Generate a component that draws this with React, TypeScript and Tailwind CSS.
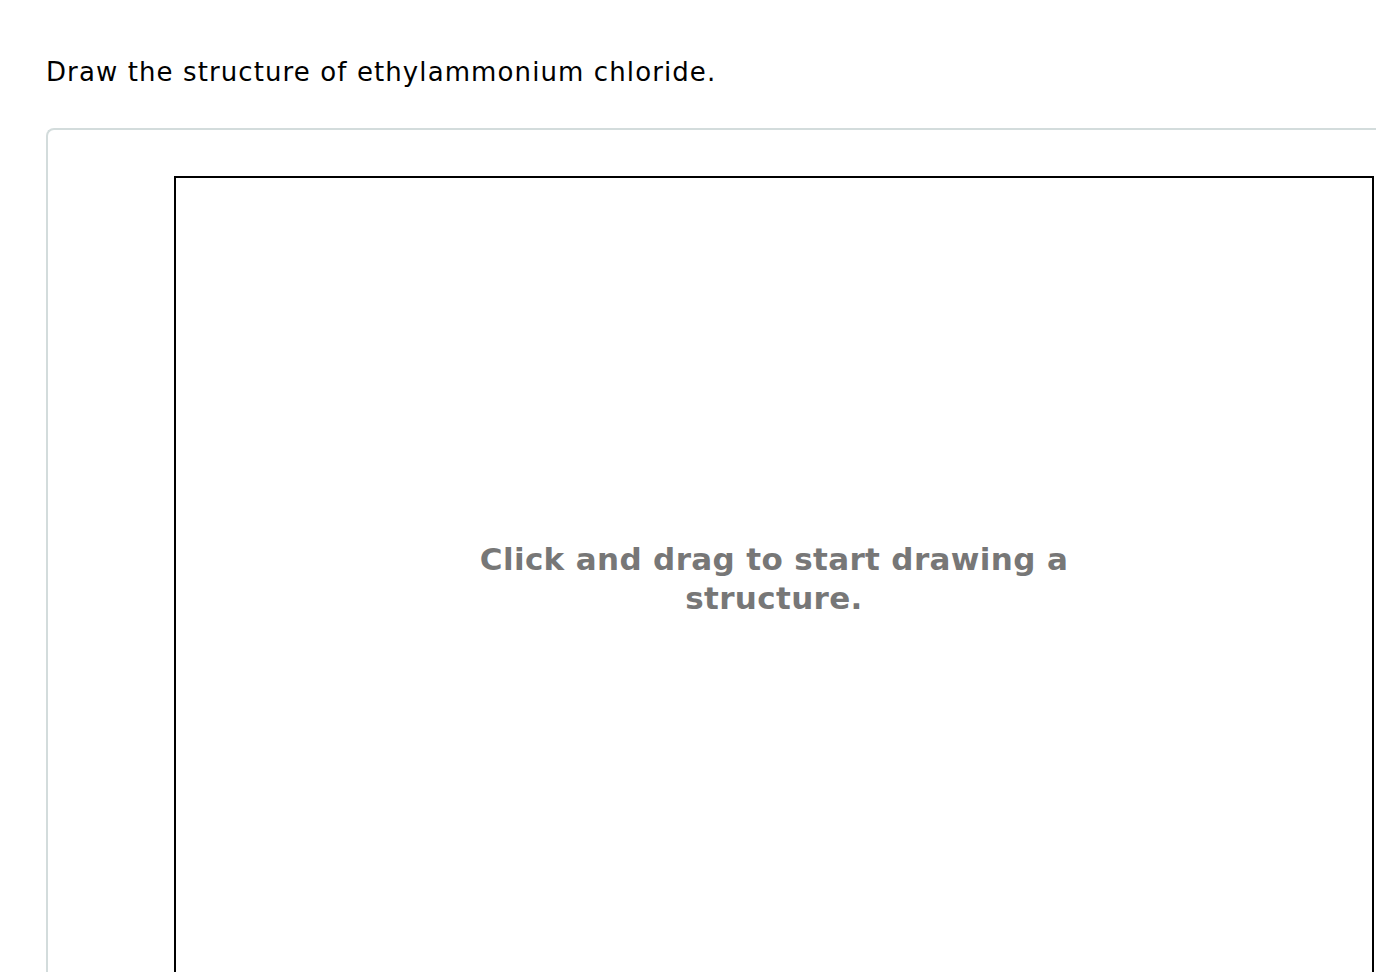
export default function App() {
  return (
    <div className="min-h-screen overflow-hidden bg-white pt-[52px] pl-[46px] font-['DejaVu_Sans',Verdana,sans-serif]">
      <p className="text-[26px] leading-[40px] tracking-[1.1px] text-black">Draw the structure of ethylammonium chloride.</p>

      <div className="mt-[36px] w-[1400px] rounded-tl-[8px] border-l-2 border-t-2 border-[#d3dcdc] pl-[126px] pt-[46px]">
        <div className="flex h-[800px] w-[1200px] items-center justify-center border-2 border-black pt-[6px]">
          <p className="text-center text-[31px] font-bold leading-[39px] tracking-[0.35px] text-[#777777]">
            Click and drag to start drawing a
            <br />
            structure.
          </p>
        </div>
      </div>
    </div>
  );
}
